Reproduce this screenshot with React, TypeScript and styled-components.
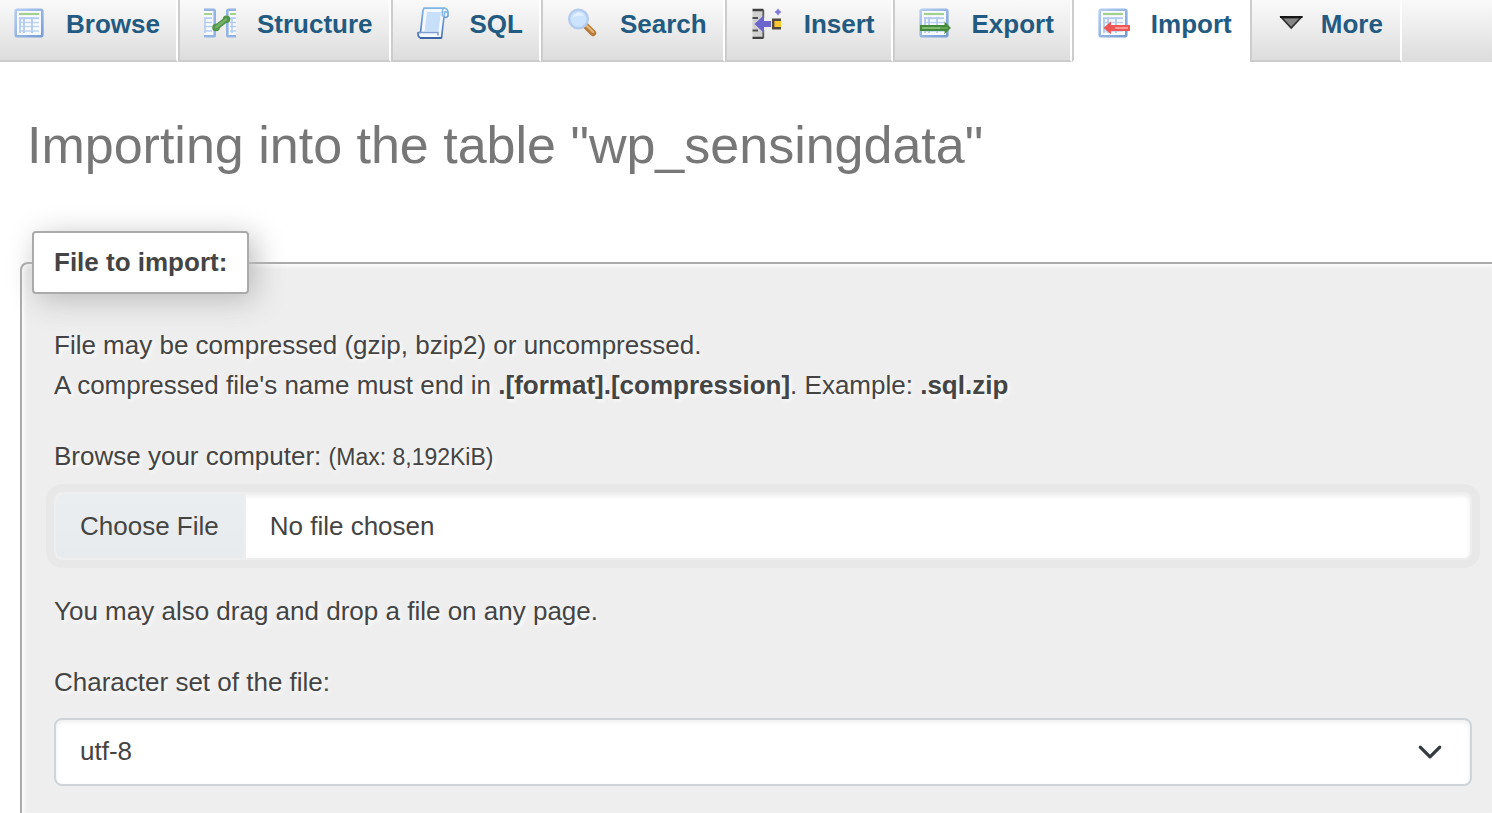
import React from "react";
import styled, { createGlobalStyle, css } from "styled-components";

const GlobalStyle = createGlobalStyle`
  *, *::before, *::after { box-sizing: border-box; }
  body {
    margin: 0;
    background: #fff;
    color: #444;
    font-family: "Liberation Sans", Arial, Helvetica, sans-serif;
    font-size: 26px;
    line-height: 40px;
  }
`;

const Page = styled.div`
  display: flex;
  flex-direction: column;
  min-height: 100vh;
  overflow-x: hidden;
`;

const TabBar = styled.nav`
  display: flex;
  height: 62px;
  overflow: hidden;
  background: linear-gradient(#fafafa, #dcdcdc);
`;

const Tab = styled.a<{ $active?: boolean; $first?: boolean; $menu?: boolean }>`
  display: flex;
  flex: none;
  align-items: flex-start;
  gap: ${(p) => (p.$menu ? 13 : 21)}px;
  padding: 7px ${(p) => (p.$menu ? 17 : 16)}px 0 24px;
  border: 0 solid #ccc;
  border-width: 0 2px 2px 2px;
  border-right-color: #fff;
  color: #235a81;
  font-weight: bold;
  line-height: 34px;
  text-decoration: none;
  ${(p) =>
    p.$first &&
    css`
      padding-left: 13px;
      border-left-width: 0;
    `}
  ${(p) =>
    p.$active &&
    css`
      background: #fff;
      border-bottom-color: #fff;
    `}
`;

const Icon = styled.svg`
  display: block;
  flex: none;
  width: 32px;
  height: 32px;
`;

const Main = styled.main`
  display: flex;
  flex: 1;
  flex-direction: column;
  padding: 51px 0 0 20px;
`;

const Title = styled.h1`
  margin: 0 0 54px;
  padding-left: 7px;
  color: #777;
  font-size: 52px;
  font-weight: normal;
  line-height: 64px;
`;

const FieldSet = styled.fieldset`
  flex: 1;
  min-width: 0;
  margin: 0;
  padding: 31px 20px 24px 32px;
  border: 2px solid #aaa;
  border-width: 2px 0 0 2px;
  border-radius: 8px 0 0 0;
  background: #eee;
  box-shadow: inset 2px 2px 4px #fff;
  text-shadow: 2px 2px 4px #fff;
`;

const Legend = styled.legend`
  margin-left: -22px;
  padding: 10px 20px;
  border: 2px solid #aaa;
  border-radius: 4px;
  background: #fff;
  box-shadow: 6px 6px 30px #bbb;
  font-weight: bold;
  line-height: 39px;
`;

const Paragraph = styled.p`
  margin: 0 0 31px;
`;

const Label = styled.label`
  display: block;
  margin-bottom: 16px;
`;

const Hint = styled.small`
  font-size: 23px;
  line-height: 1;
`;

const FileInput = styled.input`
  display: block;
  width: 100%;
  height: 68px;
  margin-bottom: 31px;
  padding: 0;
  border: 2px solid #eee;
  border-radius: 8px;
  background: #fff;
  box-shadow: 0 0 0 8px #e8e8e8, inset 0 2px 4px rgba(0, 0, 0, 0.08);
  color: #444;
  font: inherit;
  line-height: 64px;
  text-shadow: none;

  &::file-selector-button {
    height: 64px;
    margin: 0 24px 0 0;
    padding: 0 25px 2px 24px;
    border: 0 solid #eee;
    border-right-width: 2px;
    border-radius: 6px 0 0 6px;
    background: linear-gradient(#ebeef1, #e7ebee);
    color: #444;
    font: inherit;
  }
`;

const SelectBox = styled.div`
  display: grid;
  align-items: center;
  > * { grid-area: 1 / 1; }
`;

const Select = styled.select`
  width: 100%;
  height: 68px;
  padding: 0 72px 2px 24px;
  border: 2px solid #ced4da;
  border-radius: 8px;
  appearance: none;
  background: #fff;
  box-shadow: inset 0 2px 4px rgba(0, 0, 0, 0.08);
  color: #444;
  font: inherit;
  text-shadow: none;
`;

const Chevron = styled.svg`
  width: 26px;
  height: 26px;
  margin-right: 29px;
  justify-self: end;
  pointer-events: none;
`;

const FrameGradient = ({ id }: { id: string }) => (
  <defs>
    <linearGradient id={id} x1="0" y1="0" x2="1" y2="1">
      <stop offset="0" stopColor="#b3cdf3" />
      <stop offset="1" stopColor="#769dd4" />
    </linearGradient>
  </defs>
);

/* A small sheet with a green header line and a grid of cells. */
const Sheet = ({ id }: { id: string }) => (
  <>
    <FrameGradient id={id} />
    <rect x="2.7" y="2.7" width="26.6" height="26.6" rx="1.5" fill="#f7fafe" stroke={`url(#${id})`} strokeWidth="2.6" />
    <path d="M6 7H26" stroke="#a3d08f" strokeWidth="2.2" />
    <path d="M6 11.2H26" stroke="#b3cbef" strokeWidth="2" />
    <path d="M6 15.5H26M6 19.5H26M6 24H26" stroke="#bfd4f3" strokeWidth="1.5" />
    <path d="M7 10.5V26M11 10.5V26M19 10.5V26" stroke="#b3cbef" strokeWidth="1.8" />
  </>
);

const BrowseIcon = () => (
  <Icon viewBox="0 0 32 32" aria-hidden="true">
    <Sheet id="browseFrame" />
  </Icon>
);

const StructureIcon = () => (
  <Icon viewBox="0 0 32 32" aria-hidden="true">
    <path d="M0 2.7H9.5Q10.7 2.7 10.7 4V28Q10.7 29.3 9.5 29.3H0" fill="#f7fafe" stroke="#93b3e3" strokeWidth="2.6" />
    <path d="M32 2.7H25Q23.3 2.7 23.3 4V28Q23.3 29.3 25 29.3H32" fill="#f7fafe" stroke="#93b3e3" strokeWidth="2.6" />
    <path d="M0 7H8M26 7H32" stroke="#a3d08f" strokeWidth="2.2" />
    <path d="M0 11.2H8M0 15.5H8M0 19.5H8M0 24H8M26 11.2H32M26 15.5H32M26 19.5H32M26 24H32" stroke="#b5cdf0" strokeWidth="1.7" />
    <path d="M1 11V26M28 11V26" stroke="#b5cdf0" strokeWidth="1.6" />
    <path d="M12 20.5L22.5 12.3" stroke="#4f9448" strokeWidth="5.4" />
    <circle cx="12" cy="20.5" r="3.8" fill="#4f9448" />
    <circle cx="22.5" cy="12.3" r="3.8" fill="#4f9448" />
    <path d="M12 20.3L22.3 12.3" stroke="#74b068" strokeWidth="2.4" strokeLinecap="round" />
  </Icon>
);

const SqlIcon = () => (
  <Icon viewBox="0 0 32 32" aria-hidden="true">
    <defs>
      <linearGradient id="scrollEdge" x1="0" y1="0" x2="0" y2="1">
        <stop offset="0" stopColor="#7fb6e6" />
        <stop offset="1" stopColor="#4a73b5" />
      </linearGradient>
    </defs>
    <path d="M7 1.2H28Q31 2 31 6V9Q29 11.5 27 9.5L24.5 31H4Q1 30.5 1 27V25.5H3.5L6 3.5Z" fill="#f5f9ff" stroke="url(#scrollEdge)" strokeWidth="1.7" strokeLinejoin="round" />
    <path d="M10 5H24L21.5 24.5H7.5Z" fill="#c8dffa" />
    <path d="M26 1.8Q25 4 25.5 9.5M31 6.5Q30 4.5 27.5 5V9.5" fill="none" stroke="#85b9e8" strokeWidth="1.6" />
    <path d="M2 25.5H21V28.5" fill="none" stroke="#7e9fd4" strokeWidth="1.6" />
    <path d="M3 31H24.5" stroke="#365f9f" strokeWidth="1.8" />
  </Icon>
);

const SearchIcon = () => (
  <Icon viewBox="0 0 32 32" aria-hidden="true">
    <path d="M19 19L26 26" stroke="#b67b3b" strokeWidth="6.4" strokeLinecap="round" />
    <path d="M19.5 18.5L26 25" stroke="#e3b478" strokeWidth="2.4" strokeLinecap="round" />
    <circle cx="11.5" cy="12" r="9.3" fill="#cbe3fd" stroke="#b3cbee" strokeWidth="2.4" />
    <path d="M5.5 11Q6.5 6 12 5.5Q16 6 17 9Q10 8 5.5 11Z" fill="#e2f0ff" />
  </Icon>
);

const InsertIcon = () => (
  <Icon viewBox="0 0 32 32" aria-hidden="true">
    <path d="M1.5 3H12V31H1.5Z" fill="#d0d0d0" />
    <path d="M1.5 3H12.5M1.5 31H12.5" stroke="#404040" strokeWidth="2.4" />
    <path d="M1.5 11H7M1.5 23.5H7" stroke="#505050" strokeWidth="2" />
    <path d="M12.3 3V11M12.3 23V31" stroke="#5a5a5a" strokeWidth="1.8" />
    <path d="M3.5 17L13 8V14H20V20H13V26Z" fill="#6b66cf" />
    <path d="M30 12.7H22.2V21.3H30" fill="#fcc62f" stroke="#51493c" strokeWidth="2.4" />
    <path d="M27 1.5L28.5 3.5L30.5 5L28.5 6.5L27 8.5L25.5 6.5L23.5 5L25.5 3.5Z" fill="#7f7ada" />
  </Icon>
);

const ExportIcon = () => (
  <Icon viewBox="0 0 32 32" aria-hidden="true">
    <g transform="translate(-1 0)">
      <Sheet id="exportFrame" />
    </g>
    <path d="M1 18H25.5V14.5L32 21L25.5 27V24H1Z" fill="#438a3b" />
    <path d="M3 21H21" stroke="#83bd72" strokeWidth="2" />
    <path d="M21 21H29" stroke="#5fa353" strokeWidth="2" />
  </Icon>
);

const ImportIcon = () => (
  <Icon viewBox="0 0 32 32" aria-hidden="true">
    <g transform="translate(-1 0)">
      <Sheet id="importFrame" />
    </g>
    <path d="M5.5 21L13 14.5V18H32V24H13V27Z" fill="#ee5555" />
    <path d="M17 21H30" stroke="#ff9a94" strokeWidth="2" />
  </Icon>
);

const MoreIcon = () => (
  <Icon viewBox="0 0 32 32" aria-hidden="true">
    <path d="M5.5 10.5H25L15.2 21Z" fill="#858585" stroke="#303030" strokeWidth="1.8" />
    <path d="M4 10H26.5" stroke="#161616" strokeWidth="2" />
  </Icon>
);

const tabs = [
  { label: "Browse", icon: BrowseIcon },
  { label: "Structure", icon: StructureIcon },
  { label: "SQL", icon: SqlIcon },
  { label: "Search", icon: SearchIcon },
  { label: "Insert", icon: InsertIcon },
  { label: "Export", icon: ExportIcon },
  { label: "Import", icon: ImportIcon },
  { label: "More", icon: MoreIcon },
];

export default function App() {
  return (
    <Page>
      <GlobalStyle />
      <TabBar>
        {tabs.map(({ label, icon: TabIcon }, i) => (
          <Tab
            key={label}
            href="#"
            $first={i === 0}
            $active={label === "Import"}
            $menu={label === "More"}
            aria-current={label === "Import" ? "page" : undefined}
          >
            <TabIcon />
            {label}
          </Tab>
        ))}
      </TabBar>
      <Main>
        <Title>Importing into the table "wp_sensingdata"</Title>
        <FieldSet>
          <Legend>File to import:</Legend>
          <Paragraph>
            File may be compressed (gzip, bzip2) or uncompressed.
            <br />
            A compressed file's name must end in <b>.[format].[compression]</b>. Example: <b>.sql.zip</b>
          </Paragraph>
          <Label htmlFor="import-file">
            Browse your computer: <Hint>(Max: 8,192KiB)</Hint>
          </Label>
          <FileInput id="import-file" type="file" />
          <Paragraph>You may also drag and drop a file on any page.</Paragraph>
          <Label htmlFor="charset">Character set of the file:</Label>
          <SelectBox>
            <Select id="charset" defaultValue="utf-8">
              <option value="utf-8">utf-8</option>
            </Select>
            <Chevron viewBox="0 0 16 16" aria-hidden="true">
              <path d="M2 5L8 11L14 5" fill="none" stroke="#343a40" strokeWidth="2" strokeLinecap="round" strokeLinejoin="round" />
            </Chevron>
          </SelectBox>
        </FieldSet>
      </Main>
    </Page>
  );
}
